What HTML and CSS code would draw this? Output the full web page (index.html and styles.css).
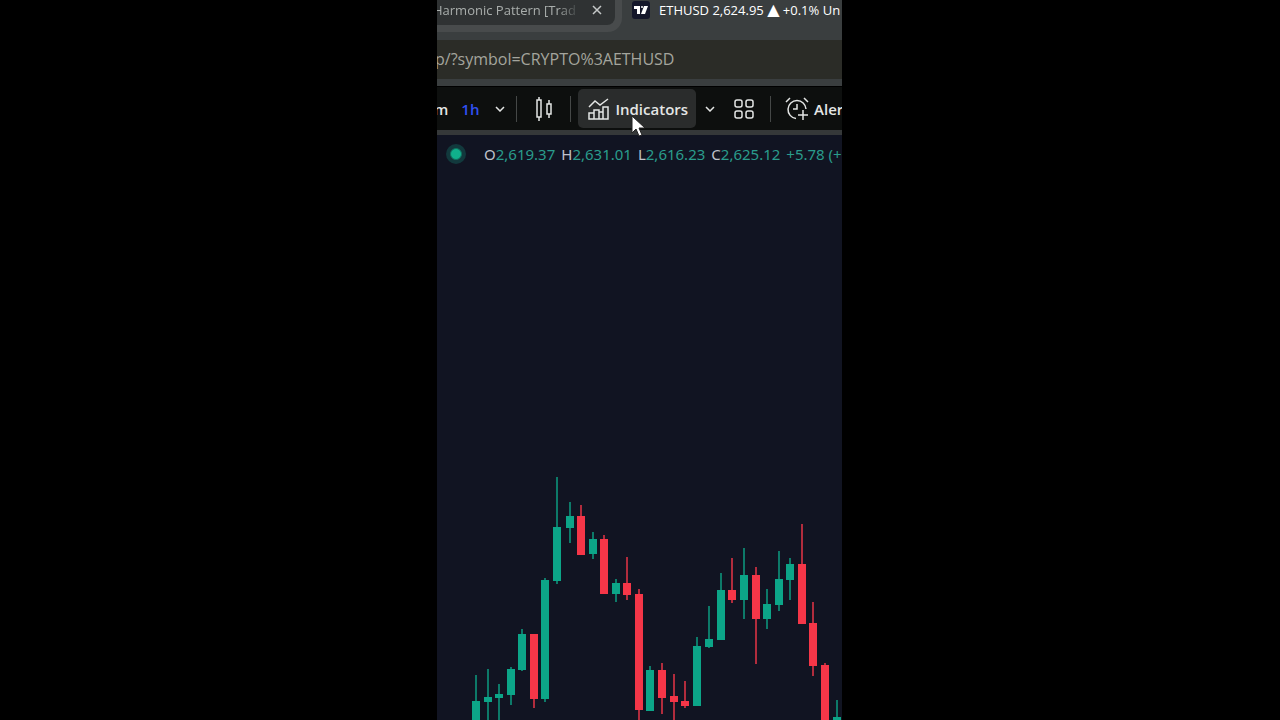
FILE: index.html
```html
<!DOCTYPE html>
<html lang="en">
<head>
<meta charset="UTF-8" />
<meta name="viewport" content="width=device-width, initial-scale=1" />
<title>ETHUSD 2,624.95</title>
<link rel="stylesheet" href="styles.css">
</head>
<body>

<main class="clip">
  <nav class="tabs" aria-label="Browser tabs">
    <div class="tab-edge">
      <div class="tab">
        <button class="tab-name" type="button">Harmonic Pattern [Trad</button>
        <button class="tab-close" type="button" aria-label="Close tab">
          <svg width="10" height="10" viewBox="0 0 10 10"><path d="M1 1l8 8M9 1l-8 8" /></svg>
        </button>
      </div>
    </div>
    <button class="tab-active" type="button">
      <svg width="18" height="18" viewBox="0 0 18 18">
        <rect width="18" height="18" rx="3" fill="#14172a" />
        <path d="M2 5h6v8H5V8H2z" fill="#fff" />
        <circle cx="10" cy="6" r="1" fill="#fff" />
        <path d="M12 5h4l-3 8H9z" fill="#fff" />
      </svg>
      <span>ETHUSD 2,624.95 <i class="rise">▲</i> +0.1% Un</span>
    </button>
  </nav>

  <div class="address">
    <input type="text" value="p/?symbol=CRYPTO%3AETHUSD" aria-label="Address" />
  </div>

  <div class="toolbar">
    <button class="interval" type="button">m</button>
    <button class="interval selected" type="button">1h</button>
    <button class="more" type="button" aria-label="Intervals">
      <svg width="10" height="6" viewBox="0 0 10 6"><path d="M1 1l4 4 4-4" /></svg>
    </button>
    <span class="divider"></span>
    <button class="tool candle-type" type="button" aria-label="Candles">
      <svg width="18" height="24" viewBox="0 0 18 24"><path d="M2 3h4v17H2zM4 0v3M4 20v4M12 7h4v10h-4zM14 3v4M14 17v4" /></svg>
    </button>
    <span class="divider"></span>
    <button class="tool indicators" type="button">
      <svg width="22" height="22" viewBox="0 0 22 22"><path d="M1 9l6-6 5 4 8-6M1 21v-6h5v6zM6 21v-9h5v9M11 21v-7h4v7M15 21V9h5v12zM1 21h19" /></svg>
      <span>Indicators</span>
      <svg class="cursor" width="16" height="22" viewBox="0 0 16 22"><path d="M1 1v17l4-4 3 7 3-1-3-7h6z" /></svg>
    </button>
    <button class="more" type="button" aria-label="Favorite indicators">
      <svg width="10" height="6" viewBox="0 0 10 6"><path d="M1 1l4 4 4-4" /></svg>
    </button>
    <button class="tool layouts" type="button" aria-label="Indicator templates">
      <svg width="20" height="20" viewBox="0 0 20 20">
        <rect x="1" y="1" width="7" height="7" rx="2" />
        <rect x="12" y="1" width="7" height="7" rx="2" />
        <rect x="1" y="12" width="7" height="7" rx="2" />
        <rect x="12" y="12" width="7" height="7" rx="2" />
      </svg>
    </button>
    <span class="divider"></span>
    <button class="tool alert" type="button">
      <svg width="24" height="24" viewBox="0 0 24 24"><path d="M11 21.500A9 9 0 1 1 21 12M12 7v5H8M1 5l4-4M19 1l4 4M18 13v10M13 18h10" /></svg>
      <span>Aler</span>
    </button>
  </div>

  <section class="chart">
    <div class="legend">
      <span class="status"></span>
      <span>O<b>2,619.37</b></span>
      <span>H<b>2,631.01</b></span>
      <span>L<b>2,616.23</b></span>
      <span>C<b>2,625.12</b></span>
      <span><b>+5.78 (+</b></span>
    </div>
    <svg id="candles" viewBox="0 -7 405 547" preserveAspectRatio="xMidYMax slice"></svg>
  </section>
</main>

<script>
  const chart = document.getElementById('candles');

  // x, high, open/close top, open/close bottom, low, direction
  const candles = [
    [39, 495, 521, 545, 545, 'up'],
    [51, 489, 517, 522, 545, 'up'],
    [62, 504, 514, 518, 545, 'up'],
    [74, 487, 489, 515, 525, 'up'],
    [85, 449, 454, 490, 491, 'up'],
    [97, 454, 454, 519, 528, 'down'],
    [108, 398, 400, 519, 522, 'up'],
    [120, 297, 347, 401, 404, 'up'],
    [133, 322, 336, 348, 363, 'up'],
    [144, 325, 336, 375, 375, 'down'],
    [156, 352, 359, 374, 379, 'up'],
    [167, 355, 359, 414, 414, 'down'],
    [179, 399, 403, 414, 422, 'up'],
    [190, 377, 403, 415, 420, 'down'],
    [202, 409, 414, 530, 545, 'down'],
    [213, 486, 490, 531, 531, 'up'],
    [225, 483, 490, 518, 534, 'down'],
    [237, 494, 516, 522, 545, 'down'],
    [248, 501, 521, 526, 528, 'down'],
    [260, 457, 466, 526, 526, 'up'],
    [272, 426, 459, 467, 468, 'up'],
    [284, 393, 410, 460, 460, 'up'],
    [295, 378, 410, 420, 423, 'down'],
    [307, 368, 395, 420, 439, 'up'],
    [319, 387, 395, 439, 484, 'down'],
    [330, 409, 424, 439, 449, 'up'],
    [342, 371, 399, 425, 431, 'up'],
    [353, 378, 384, 400, 420, 'up'],
    [365, 344, 384, 444, 444, 'down'],
    [376, 422, 443, 486, 496, 'down'],
    [388, 483, 485, 545, 545, 'down'],
    [400, 520, 537, 545, 545, 'up']
  ];

  function addRect(x, y, width, height, name) {
    const rect = document.createElementNS('http://www.w3.org/2000/svg', 'rect');
    rect.setAttribute('x', x);
    rect.setAttribute('y', y);
    rect.setAttribute('width', width);
    rect.setAttribute('height', height);
    rect.setAttribute('class', name);
    chart.appendChild(rect);
  }

  candles.forEach(([x, high, top, bottom, low, dir]) => {
    addRect(x - 1, high, 2, low - high, 'wick ' + dir);
    addRect(x - 4, top, 8, bottom - top, dir);
  });
</script>

</body>
</html>
```
FILE: styles.css
```css
* {
  box-sizing: border-box;
}

body {
  margin: 0;
  padding-right: 1px;
  height: 100vh;
  background: #000;
  overflow: hidden;
  font-family: "Noto Sans", sans-serif;
}

button, input {
  border: 0;
  padding: 0;
  background: none;
  color: inherit;
  font: inherit;
}

button {
  display: flex;
  align-items: center;
  flex-shrink: 0;
  white-space: nowrap;
  cursor: pointer;
}

svg {
  display: block;
  flex-shrink: 0;
  fill: none;
  stroke: currentColor;
}

/* portrait clip in the middle of a black frame */
.clip {
  display: flex;
  flex-direction: column;
  height: 100%;
  aspect-ratio: 9 / 16;
  margin: 0 auto;
  overflow: hidden;
  background: #3a3e3f;
}

/* browser */
.tabs {
  display: flex;
  flex-shrink: 0;
  align-items: flex-start;
  height: 40px;
  font-family: "Open Sans", sans-serif;
  font-size: 13px;
  line-height: 20px;
}

.tab-edge {
  padding: 0 7px 7px 0;
  border-radius: 0 0 14px 0;
  background: #484b4c;
}

.tab {
  display: flex;
  height: 25px;
  padding-right: 13px;
  border-radius: 0 0 8px 0;
  background: #2f3233;
  color: #a9aeac;
}

.tab-name {
  height: 20px;
  width: 147px;
  margin-left: -4px;
  -webkit-mask-image: linear-gradient(to right, #000 85%, transparent);
  mask-image: linear-gradient(to right, #000 85%, transparent);
}

.tab-close {
  height: 20px;
  margin-left: 12px;
  color: #c5c8c8;
}

.tab-close svg {
  stroke-width: 1.5;
}

.tab-active {
  gap: 9px;
  height: 20px;
  margin-left: 10px;
  color: #fff;
  font-weight: 500;
}

.tab-active svg {
  stroke: none;
}

.rise {
  font-family: "DejaVu Sans", sans-serif;
  font-size: 16px;
  font-style: normal;
  line-height: 16px;
}

.address {
  flex-shrink: 0;
  height: 47px;
  padding-bottom: 8px;
  border-bottom: 1px solid #000;
}

.address input {
  display: block;
  width: 100%;
  height: 39px;
  padding-bottom: 2px;
  background: #2b2c27;
  color: #a4a59d;
  font-family: "Open Sans", sans-serif;
  font-size: 16px;
  text-indent: -2px;
}

/* chart toolbar */
.toolbar {
  display: flex;
  flex-shrink: 0;
  align-items: center;
  height: 48px;
  border-bottom: 5px solid #353839;
  background: #0d0f0e;
  color: #e4e6e5;
  font-family: "Open Sans", sans-serif;
  font-size: 15px;
  font-weight: 600;
}

.interval:first-child {
  margin-left: -3px;
}

.selected {
  margin-left: 13px;
  color: #3050f0;
}

.more {
  justify-content: center;
  width: 28px;
}

.interval + .more {
  margin: 0 2px 0 7px;
}

.divider {
  flex-shrink: 0;
  width: 1px;
  height: 26px;
  background: #454847;
}

.tool {
  height: 39px;
}

.candle-type {
  justify-content: center;
  width: 53px;
}

.indicators {
  position: relative;
  gap: 5px;
  margin-left: 7px;
  padding: 0 8px 0 10px;
  border-radius: 5px;
  background: #2a2c2c;
}

.layouts {
  justify-content: center;
  width: 39px;
  margin-right: 7px;
}

.alert {
  gap: 5px;
  margin-left: 14px;
}

.toolbar svg {
  stroke-width: 1.5;
}

/* pointer resting on the hovered button */
.toolbar .cursor {
  position: absolute;
  left: 53px;
  top: 26px;
  fill: #fff;
  stroke: #222;
  stroke-width: 1;
}

/* chart */
.chart {
  display: flex;
  flex: 1;
  flex-direction: column;
  min-height: 0;
  background: #111422;
}

.legend {
  display: flex;
  flex-shrink: 0;
  align-items: center;
  gap: 6px;
  height: 38px;
  padding-left: 13px;
  color: #bfc2cc;
  font-size: 15px;
  white-space: nowrap;
}

.legend b {
  color: #2a9c8c;
  font-weight: 400;
}

.status {
  flex-shrink: 0;
  width: 12px;
  height: 12px;
  margin-right: 16px;
  border: 1px solid #10705f;
  border-radius: 50%;
  background: #10b08c;
  box-shadow: 0 0 0 4px #12393d;
}

#candles {
  flex: 1;
  width: 100%;
  min-height: 0;
  stroke: none;
}

.up {
  fill: #0ca588;
}

.down {
  fill: #f53648;
}

.wick {
  opacity: 0.7;
}
```
